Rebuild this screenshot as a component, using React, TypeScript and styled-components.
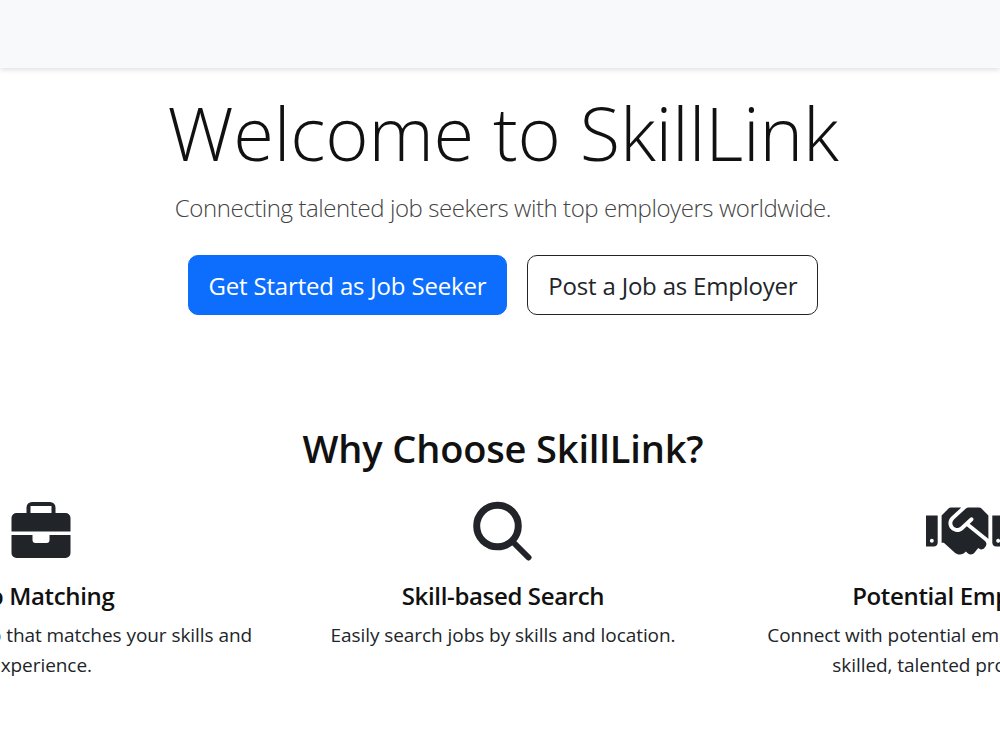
import React from "react";
import styled, { createGlobalStyle } from "styled-components";
import { FaHandshake } from "react-icons/fa";

const Global = createGlobalStyle`
  html, body { margin: 0; padding: 0; background: #fff; height: 750px; overflow: hidden; }
  body { font-family: "Open Sans", "Noto Sans", sans-serif; color: #212529; }
`;
const Page = styled.div`width: 1000px; height: 750px; overflow: hidden;`;
const Navbar = styled.div`height: 68px; background: #f8f9fa; box-shadow: 0 2px 5px rgba(0,0,0,.12);`;
const Hero = styled.section`display: flex; flex-direction: column; align-items: center; padding-left: 6px;`;
const Title = styled.h1`margin: 17px 0 0; font-size: 74px; font-weight: 300; line-height: 96px; color: #111; letter-spacing: -.2px; white-space: nowrap;`;
const Lead = styled.p`margin: 9px 0 0; font-size: 24px; font-weight: 300; line-height: 36px; color: #444; letter-spacing: -.42px; white-space: nowrap;`;
const Actions = styled.div`display: flex; gap: 20px; margin-top: 29px;`;
const Button = styled.a<{ $primary?: boolean }>`
  display: flex; align-items: center; justify-content: center; box-sizing: border-box;
  height: 60px; padding: 0 20px; border-radius: 10px; font-size: 24px;
  letter-spacing: ${p => p.$primary ? "-.18px" : "-.2px"};
  border: 1px solid ${p => p.$primary ? "#0d6efd" : "#212529"};
  background: ${p => p.$primary ? "#0d6efd" : "#fff"};
  color: ${p => p.$primary ? "#fff" : "#212529"};
`;
const Heading = styled.h2`margin: 109px 0 0; font-size: 38px; line-height: 48px; font-weight: 600; color: #111; letter-spacing: -.15px; text-align: center; padding-left: 6px;`;
const Features = styled.div`display: flex; justify-content: center; margin-top: 29px; padding-left: 6px;`;
const Feature = styled.div`flex: 0 0 462px; display: flex; flex-direction: column; align-items: center; text-align: center;`;
const IconBox = styled.div`height: 60px; display: flex; align-items: center; justify-content: center; color: #212529;`;
const FeatureTitle = styled.h4`margin: 20px 0 0; font-size: 24px; line-height: 30px; font-weight: 600; color: #111; letter-spacing: -.35px;`;
const FeatureText = styled.p`margin: 9px 0 0; width: 430px; font-size: 19px; line-height: 30px; letter-spacing: -.06px;`;

export default function App() {
  return (
    <Page>
      <Global />
      <Navbar />
      <Hero>
        <Title>Welcome to SkillLink</Title>
        <Lead>Connecting talented job seekers with top employers worldwide.</Lead>
        <Actions>
          <Button $primary>Get Started as Job Seeker</Button>
          <Button>Post a Job as Employer</Button>
        </Actions>
      </Hero>
      <Heading>Why Choose SkillLink?</Heading>
      <Features>
        <Feature>
          <IconBox>
            <svg width="60" height="60" viewBox="0 0 60 60" fill="currentColor">
              <path fillRule="evenodd" d="M15.5 12V6.5A5.5 5.5 0 0 1 21 1h18a5.5 5.5 0 0 1 5.5 5.5V12h-4V5h-21v7z" />
              <path d="M.5 30.5V17a5 5 0 0 1 5-5h49a5 5 0 0 1 5 5v13.5z" />
              <path d="M.5 34h21v5a3 3 0 0 0 3 3h11a3 3 0 0 0 3-3v-5h21v18a5 5 0 0 1-5 5h-49a5 5 0 0 1-5-5z" />
            </svg>
          </IconBox>
          <FeatureTitle>Job Matching</FeatureTitle>
          <FeatureText>Find the perfect job that matches your skills and experience.</FeatureText>
        </Feature>
        <Feature>
          <IconBox>
            <svg width="60" height="60" viewBox="0 0 60 60" fill="none" stroke="currentColor" strokeLinecap="round">
              <circle cx="24.5" cy="25" r="20.8" strokeWidth="7" />
              <path d="M40 41 L55.5 56.5" strokeWidth="6" />
            </svg>
          </IconBox>
          <FeatureTitle>Skill-based Search</FeatureTitle>
          <FeatureText>Easily search jobs by skills and location.</FeatureText>
        </Feature>
        <Feature>
          <IconBox><FaHandshake size={78} /></IconBox>
          <FeatureTitle>Potential Employers</FeatureTitle>
          <FeatureText>Connect with potential employers looking for skilled, talented professionals.</FeatureText>
        </Feature>
      </Features>
    </Page>
  );
}
